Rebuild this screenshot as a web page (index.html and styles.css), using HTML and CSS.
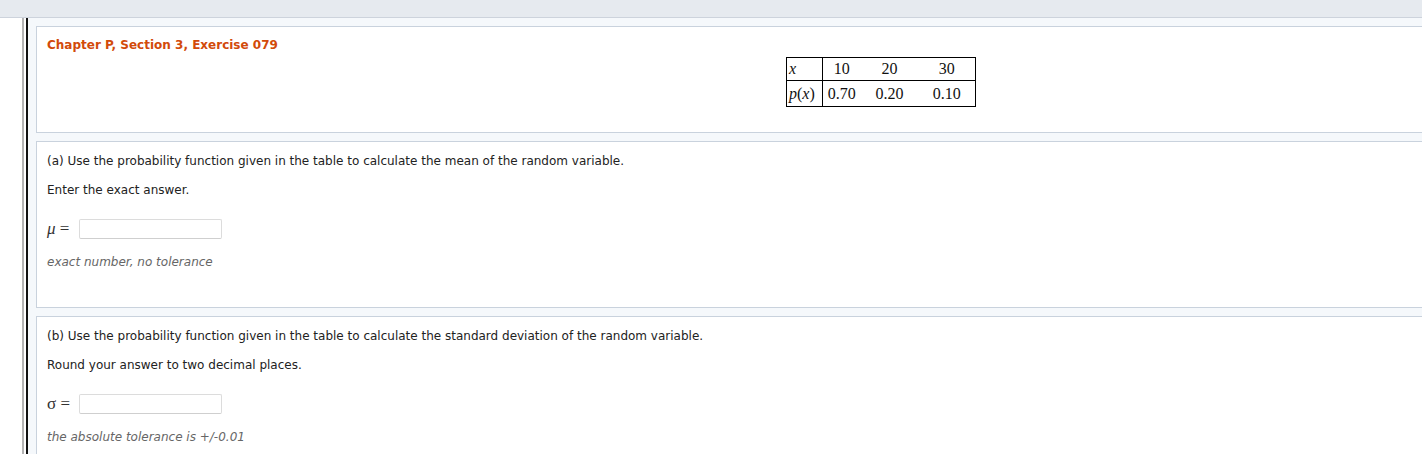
FILE: index.html
```html
<!DOCTYPE html>
<html>
<head>
<meta charset="utf-8">
<link rel="stylesheet" href="styles.css">
</head>
<body>
<div class="topbar"></div>
<div class="layout">
  <div class="gutter"></div>
  <div class="rule-gray"></div>
  <div class="rule-space"></div>
  <div class="rule-black"></div>
  <main class="main">
    <section class="panel panel-head">
      <h1 class="title">Chapter P, Section 3, Exercise 079</h1>
      <table class="ptable">
        <colgroup>
          <col class="c-lbl">
          <col class="c-1">
          <col class="c-2">
          <col class="c-3">
        </colgroup>
        <tr class="r1">
          <td class="lbl"><i>x</i></td>
          <td>10</td>
          <td>20</td>
          <td>30</td>
        </tr>
        <tr class="r2">
          <td class="lbl"><i>p</i>(<i>x</i>)</td>
          <td>0.70</td>
          <td>0.20</td>
          <td>0.10</td>
        </tr>
      </table>
    </section>
    <section class="panel panel-q">
      <p class="q">(a) Use the probability function given in the table to calculate the mean of the random variable.</p>
      <p class="q">Enter the exact answer.</p>
      <div class="answer"><span class="sym"><i>μ</i> =</span><span class="inp"></span></div>
      <p class="hint">exact number, no tolerance</p>
    </section>
    <section class="panel panel-q">
      <p class="q">(b) Use the probability function given in the table to calculate the standard deviation of the random variable.</p>
      <p class="q">Round your answer to two decimal places.</p>
      <div class="answer"><span class="sym">σ =</span><span class="inp"></span></div>
      <p class="hint">the absolute tolerance is +/-0.01</p>
    </section>
  </main>
</div>
</body>
</html>
```
FILE: styles.css
```css
html, body {
  margin: 0;
  padding: 0;
  background: #ffffff;
  overflow: hidden;
}
body {
  font-family: "DejaVu Sans", Verdana, sans-serif;
  font-size: 12px;
  color: #222;
}
.topbar {
  height: 17px;
  background: #e6eaef;
  border-bottom: 1px solid #cdd3dc;
}
.layout {
  display: flex;
  height: 436px;
  overflow: hidden;
}
.gutter {
  width: 22px;
  background: #fff;
  flex: none;
}
.rule-gray {
  width: 2px;
  background: #b4b4b4;
  flex: none;
}
.rule-space {
  width: 2px;
  background: #fff;
  flex: none;
}
.rule-black {
  width: 2px;
  background: #111;
  flex: none;
}
.main {
  flex: none;
  width: 1700px;
  background: #f5f8fb;
  padding: 8px 0 0 8px;
  display: flex;
  flex-direction: column;
  gap: 8px;
}
.panel {
  flex: none;
  background: #fff;
  border: 1px solid #c9d2dd;
  padding: 0 10px;
}
.panel-head {
  height: 107px;
  box-sizing: border-box;
  padding-top: 11px;
}
.title {
  margin: 0;
  font-size: 12px;
  font-weight: bold;
  color: #d24a0a;
  line-height: 15px;
}
.ptable {
  margin: 4px 0 0 739px;
  border-collapse: collapse;
  table-layout: fixed;
  width: 189px;
  font-family: "Liberation Serif", "Times New Roman", serif;
  font-size: 16px;
  color: #111;
  border: 1px solid #000;
}
.c-lbl { width: 36px; }
.c-1 { width: 38px; }
.c-2 { width: 58px; }
.c-3 { width: 57px; }
.ptable td {
  padding: 0;
  text-align: center;
  line-height: 18px;
}
.ptable .r1 td { height: 22px; }
.ptable .r2 td {
  border-top: 1px solid #000;
  height: 25px;
}
.ptable .lbl {
  border-right: 1px solid #000;
  text-align: left;
  padding-left: 2px;
}
.panel-q {
  height: 167px;
  box-sizing: border-box;
  padding-top: 12px;
}
.q {
  margin: 0 0 14px 0;
  line-height: 15px;
}
.answer {
  display: flex;
  align-items: center;
  margin-top: 21px;
  height: 20px;
}
.sym {
  font-family: "Liberation Serif", "Times New Roman", serif;
  font-size: 17px;
  color: #333;
  width: 32px;
  flex: none;
}
.inp {
  width: 141px;
  height: 18px;
  border: 1px solid #dcdcdc;
  border-bottom-color: #cfcfcf;
  border-radius: 2px;
  background: #fff;
}
.hint {
  margin: 16px 0 0;
  font-style: italic;
  color: #666;
  line-height: 15px;
}
```
